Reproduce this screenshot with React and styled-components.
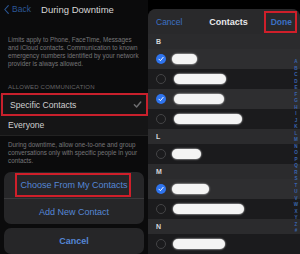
import React from 'react';
import styled, { createGlobalStyle } from 'styled-components';

const GlobalStyle = createGlobalStyle`
  html, body {
    margin: 0;
    padding: 0;
    background: #000;
  }
  body {
    font-family: "Liberation Sans", Arial, sans-serif;
    -webkit-font-smoothing: antialiased;
  }
`;

const Screen = styled.div`
  width: 300px;
  height: 254px;
  display: grid;
  grid-template-columns: 148px 152px;
  overflow: hidden;
  background: #000;
`;

/* ---------- left: During Downtime ---------- */

const LeftPanel = styled.div`
  display: flex;
  flex-direction: column;
  background: #0b0b0c;
  height: 254px;
  overflow: hidden;
`;

const NavBar = styled.div`
  height: 22px;
  display: flex;
  align-items: center;
  padding-left: 4px;
`;

const BackLink = styled.div`
  display: flex;
  align-items: center;
  gap: 3px;
  color: #2c5796;
  font-size: 8.5px;
`;

const NavTitle = styled.div`
  flex: 1;
  text-align: center;
  color: #d6d6d6;
  font-size: 9.5px;
  font-weight: 500;
  margin-right: 28px;
  margin-left: 4px;
`;

const Note = styled.p`
  margin: ${p => p.$top}px 0 0;
  padding: 0 7px 0 8px;
  color: #777779;
  font-size: 6.3px;
  line-height: 8px;
`;

const SectionLabel = styled.div`
  margin-top: 16px;
  padding-left: 8px;
  color: #666668;
  font-size: 6px;
  letter-spacing: 0.2px;
  text-transform: uppercase;
`;

const Group = styled.div`
  margin-top: 4px;
  background: #151516;
  display: flex;
  flex-direction: column;
`;

const OptionRow = styled.div`
  height: 21px;
  display: flex;
  align-items: center;
  justify-content: space-between;
  padding: 0 5px 0 8px;
  color: #cfcfd1;
  font-size: 8.6px;
  box-sizing: border-box;
  outline: ${p => (p.$marked ? '2px solid #c8202c' : 'none')};
  outline-offset: -1px;
  margin: ${p => (p.$marked ? '0 1px 0 2px' : '0')};
  border-bottom: ${p => (p.$marked ? 'none' : '0.5px solid #222')};
`;

const SheetGroup = styled.div`
  margin: ${p => p.$top}px 4px 0;
  background: #262628;
  border-radius: 7px;
  display: flex;
  flex-direction: column;
  flex-shrink: 0;
`;

const SheetButton = styled.div`
  height: 26px;
  display: flex;
  align-items: center;
  justify-content: center;
  color: #5586d6;
  font-size: 9px;
  font-weight: ${p => (p.$bold ? 600 : 400)};
  border-top: ${p => (p.$divider ? '0.5px solid #3a3a3c' : 'none')};
  box-sizing: border-box;
  position: relative;
`;

const RedBox = styled.span`
  position: absolute;
  border: 2px solid #cf1f2a;
  box-sizing: border-box;
  pointer-events: none;
`;

/* ---------- right: Contacts ---------- */

const RightPanel = styled.div`
  margin-top: 9px;
  background: #1b1b1d;
  border-radius: 8px 8px 0 0;
  overflow: hidden;
  display: flex;
  flex-direction: column;
  position: relative;
`;

const SheetHeader = styled.div`
  height: 25px;
  flex-shrink: 0;
  background: #29292b;
  display: flex;
  align-items: center;
  justify-content: space-between;
  padding: 0 6px 0 6px;
`;

const HeaderLink = styled.div`
  color: #3b70c4;
  font-size: 8.5px;
  font-weight: ${p => (p.$bold ? 700 : 400)};
  position: relative;
  padding: 0 2px;
`;

const HeaderTitle = styled.div`
  color: #e8e8ea;
  font-size: 9px;
  font-weight: 700;
  margin-left: 4px;
`;

const LetterHeader = styled.div`
  height: 15px;
  flex-shrink: 0;
  background: #2b2b2d;
  display: flex;
  align-items: center;
  padding-left: 8px;
  color: #d8d8da;
  font-size: 7px;
  font-weight: 700;
`;

const ContactRow = styled.div`
  height: 20px;
  flex-shrink: 0;
  display: flex;
  align-items: center;
  gap: 6px;
  padding-left: 8px;
  background: ${p => (p.$checked ? '#2e2e30' : '#1b1b1d')};
`;

const Circle = styled.div`
  width: 10px;
  height: 10px;
  border-radius: 50%;
  box-sizing: border-box;
  flex-shrink: 0;
  display: flex;
  align-items: center;
  justify-content: center;
  background: ${p => (p.$checked ? '#2f74ee' : 'transparent')};
  border: ${p => (p.$checked ? 'none' : '1px solid #444446')};
`;

const Redaction = styled.div`
  height: 10px;
  border-radius: 5px;
  background: #f4f4f4;
  box-shadow: 0 0 1.5px 0.5px rgba(255, 255, 255, 0.6);
  margin-left: ${p => p.$shift || 0}px;
`;

const IndexBar = styled.div`
  position: absolute;
  right: 1px;
  top: 50px;
  display: flex;
  flex-direction: column;
  align-items: center;
  width: 6px;
`;

const IndexLetter = styled.span`
  color: #3a66b0;
  font-size: 4.6px;
  line-height: 6.5px;
  font-weight: 700;
`;

const Chevron = () => (
  <svg width="5" height="9" viewBox="0 0 5 9">
    <path d="M4.3 0.6 L0.8 4.5 L4.3 8.4" fill="none" stroke="#2c5796" strokeWidth="1.1" strokeLinecap="round" strokeLinejoin="round" />
  </svg>
);

const Tick = ({ color = '#fff', size = 6 }) => (
  <svg width={size} height={size} viewBox="0 0 10 10">
    <path d="M1.5 5.3 L4 7.8 L8.6 2.2" fill="none" stroke={color} strokeWidth="1.6" strokeLinecap="round" strokeLinejoin="round" />
  </svg>
);

const contacts = [
  { type: 'letter', label: 'B' },
  { checked: true, w: 25 },
  { w: 52, shift: 2 },
  { checked: true, w: 50, shift: 2 },
  { w: 68, shift: 2 },
  { type: 'letter', label: 'L' },
  { w: 29 },
  { type: 'letter', label: 'M' },
  { checked: true, w: 37 },
  { w: 71, shift: 1 },
  { type: 'letter', label: 'N' },
  { w: 52, shift: 1 },
];

const indexLetters = 'ABCDEFGHIJKLMNOPQRSTUVWXYZ#'.split('');

const App = () => (
  <>
    <GlobalStyle />
    <Screen>
      <LeftPanel>
        <NavBar>
          <BackLink>
            <Chevron />
            Back
          </BackLink>
          <NavTitle>During Downtime</NavTitle>
        </NavBar>
        <Note $top={18}>
          Limits apply to Phone, FaceTime, Messages and iCloud contacts. Communication to known emergency numbers identified by your network provider is always allowed.
        </Note>
        <SectionLabel>Allowed Communication</SectionLabel>
        <Group>
          <OptionRow $marked>
            Specific Contacts
            <Tick color="#6e6e70" size={9} />
          </OptionRow>
          <OptionRow>Everyone</OptionRow>
        </Group>
        <Note $top={5}>
          During downtime, allow one-to-one and group conversations only with specific people in your contacts.
        </Note>
        <SheetGroup $top={7}>
          <SheetButton>
            Choose From My Contacts
            <RedBox style={{ left: 11, right: 13, top: 1, bottom: 1 }} />
          </SheetButton>
          <SheetButton $divider>Add New Contact</SheetButton>
        </SheetGroup>
        <SheetGroup $top={4}>
          <SheetButton $bold>Cancel</SheetButton>
        </SheetGroup>
      </LeftPanel>

      <RightPanel>
        <SheetHeader>
          <HeaderLink>Cancel</HeaderLink>
          <HeaderTitle>Contacts</HeaderTitle>
          <HeaderLink $bold>
            Done
            <RedBox style={{ left: -5, right: -3, top: -6, bottom: -6 }} />
          </HeaderLink>
        </SheetHeader>
        {contacts.map((c, i) =>
          c.type === 'letter' ? (
            <LetterHeader key={i}>{c.label}</LetterHeader>
          ) : (
            <ContactRow key={i} $checked={c.checked}>
              <Circle $checked={c.checked}>{c.checked && <Tick />}</Circle>
              <Redaction $shift={c.shift} style={{ width: c.w }} />
            </ContactRow>
          )
        )}
        <IndexBar>
          {indexLetters.map(l => (
            <IndexLetter key={l}>{l}</IndexLetter>
          ))}
        </IndexBar>
      </RightPanel>
    </Screen>
  </>
);

export default App;
